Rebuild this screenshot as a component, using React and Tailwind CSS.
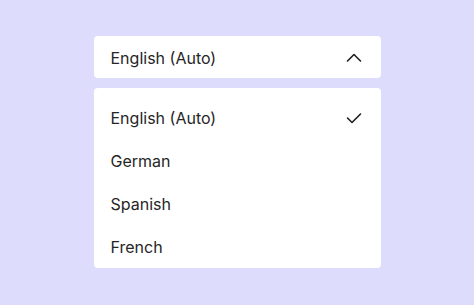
import React, { useState } from "react";

const LANGUAGES = ["English (Auto)", "German", "Spanish", "French"];

function ChevronUp() {
    return (
        <svg width="16" height="10" viewBox="0 0 16 10" fill="none" stroke="#1f1f1f" strokeWidth="1.6" strokeLinecap="round" strokeLinejoin="round">
            <polyline points="1.5,8 8,1.5 14.5,8" />
        </svg>
    );
}

function CheckMark() {
    return (
        <svg width="16" height="12" viewBox="0 0 16 12" fill="none" stroke="#1f1f1f" strokeWidth="1.6" strokeLinecap="round" strokeLinejoin="round">
            <polyline points="1.5,6 6,10.5 14.5,2" />
        </svg>
    );
}

export default function App() {
    const [selected, setSelected] = useState("English (Auto)");

    return (
        <div className="w-[474px] h-[305px] bg-[#dddcfd] flex flex-col items-center pt-[36px] gap-[10px] font-['Inter',_sans-serif] text-[#262626]">
            <button className="w-[287px] h-[42px] bg-white rounded-[4px] flex items-center justify-between pl-[17px] pr-[19px] pt-[2px] text-[16px]">
                <span>{selected}</span>
                <ChevronUp />
            </button>

            <div className="w-[287px] bg-white rounded-[4px] pt-[8px] flex flex-col">
                {LANGUAGES.map((lang) => (
                    <div
                        key={lang}
                        onClick={() => setSelected(lang)}
                        className="h-[43px] flex items-center justify-between pl-[17px] pr-[19px] pt-[1px] text-[16px] cursor-pointer"
                    >
                        <span>{lang}</span>
                        {selected === lang && <CheckMark />}
                    </div>
                ))}
            </div>
        </div>
    );
}
